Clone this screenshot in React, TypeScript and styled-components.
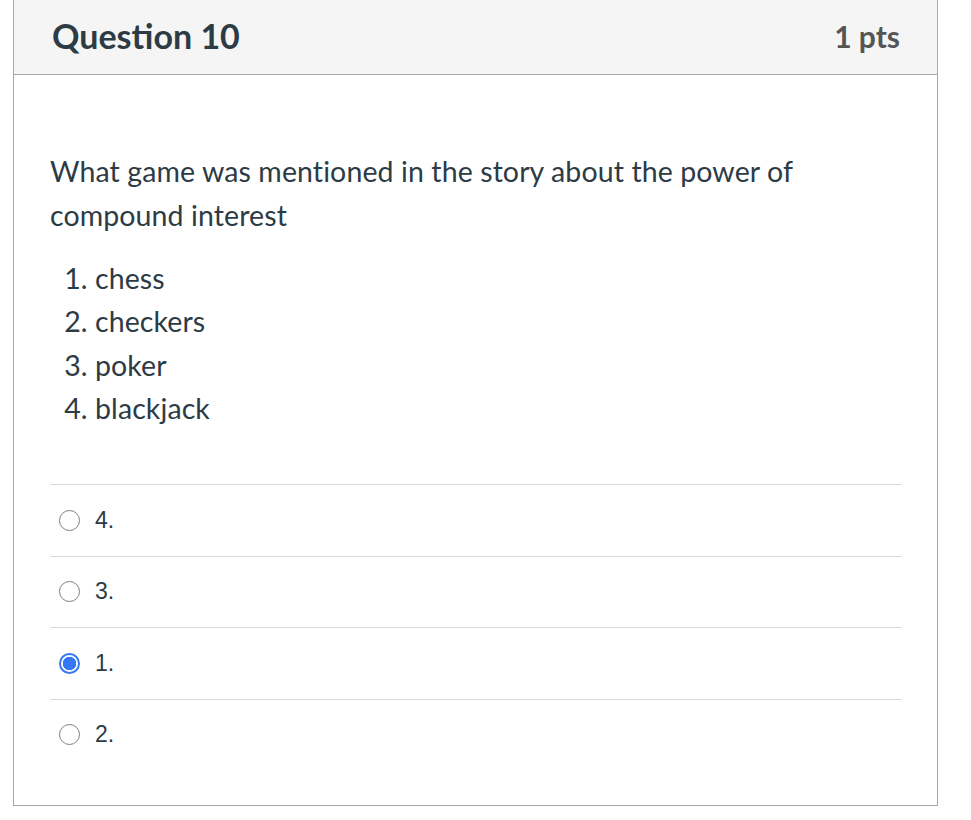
import React from "react";
import styled, { createGlobalStyle } from "styled-components";

const Global = createGlobalStyle`
  html, body { margin: 0; padding: 0; background: #ffffff; }
  body { font-family: Lato, "Noto Sans", sans-serif; color: #2d3b45; }
`;

const Card = styled.section`
  margin: -1px 0 0 13px;
  width: 925px;
  box-sizing: border-box;
  border: 1px solid #a9a9a9;
  background: #fff;
`;

const Header = styled.header`
  height: 75px;
  box-sizing: border-box;
  background: #f5f5f5;
  border-bottom: 1px solid #a9a9a9;
  display: flex;
  align-items: center;
  justify-content: space-between;
  padding: 0 37px 3px 38px;
`;

const Title = styled.h2`
  margin: 0;
  font-family: Lato, sans-serif;
  font-weight: 700;
  font-size: 34px;
  color: #2d3b45;
`;

const Points = styled.span`
  font-family: Lato, sans-serif;
  font-weight: 700;
  font-size: 30px;
  color: #555555;
`;

const Body = styled.div`
  padding: 74px 35px 35px 36px;
`;

const Prompt = styled.p`
  margin: 0 0 20px 0;
  font-size: 28.5px;
  letter-spacing: 0.1px;
  line-height: 44px;
  color: #2d3b45;
`;

const Options = styled.ol`
  margin: 0;
  padding: 0 0 0 45px;
  font-size: 28.5px;
  letter-spacing: 0.1px;
  line-height: 43.3px;
  color: #2d3b45;
`;

const Answers = styled.div`
  margin-top: 54px;
`;

const Row = styled.label`
  display: flex;
  align-items: center;
  gap: 15px;
  height: 71.5px;
  box-sizing: border-box;
  border-top: 1px solid #dadada;
  padding-left: 9px;
  font-family: "Liberation Sans", Arial, sans-serif;
  font-size: 23px;
  color: #2d3b45;
`;

const Radio = styled.span<{ $checked: boolean }>`
  width: 21px;
  height: 21px;
  box-sizing: border-box;
  border-radius: 50%;
  border: ${(p) => (p.$checked ? "2px solid #3478f6" : "1.5px solid #808080")};
  background: ${(p) =>
    p.$checked ? "radial-gradient(circle, #3478f6 0 6.5px, #fff 7px)" : "#fff"};
  flex: none;
`;

const answers = [
  { label: "4.", checked: false },
  { label: "3.", checked: false },
  { label: "1.", checked: true },
  { label: "2.", checked: false },
];

export default function App() {
  return (
    <>
      <Global />
      <Card>
        <Header>
          <Title>Question 10</Title>
          <Points>1 pts</Points>
        </Header>
        <Body>
          <Prompt>
            What game was mentioned in the story about the power of compound interest
          </Prompt>
          <Options>
            <li>chess</li>
            <li>checkers</li>
            <li>poker</li>
            <li>blackjack</li>
          </Options>
          <Answers>
            {answers.map((a) => (
              <Row key={a.label}>
                <Radio $checked={a.checked} />
                {a.label}
              </Row>
            ))}
          </Answers>
        </Body>
      </Card>
    </>
  );
}
